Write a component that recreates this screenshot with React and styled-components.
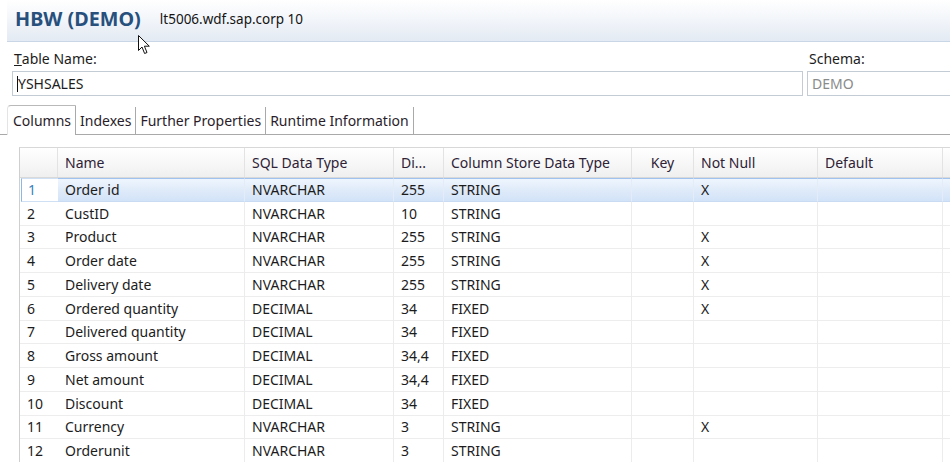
import React from "react";
import styled, { createGlobalStyle } from "styled-components";

const Global = createGlobalStyle`
  html, body { margin: 0; padding: 0; background: #fff; }
  body { width: 950px; height: 462px; overflow: hidden; font-family: "Segoe UI", "Noto Sans", "Open Sans", sans-serif; }
  * { box-sizing: border-box; }
`;

const Page = styled.div`
  position: relative;
  width: 950px;
  height: 462px;
  overflow: hidden;
  background: #fff;
`;

const Header = styled.div`
  margin-left: 7px;
  height: 42px;
  display: flex;
  align-items: center;
  gap: 19px;
  padding: 0 0 4px 8px;
  background: linear-gradient(#ffffff 0%, #f3f6fa 45%, #e3eaf3 100%);
  border-bottom: 1px solid #c9d6e6;
`;

const Title = styled.h1`
  margin: 0;
  font-size: 19.8px;
  font-weight: 700;
  color: #27507d;
`;

const Host = styled.span`
  font-size: 13.5px;
  color: #141414;
  padding-top: 1px;
`;

const Form = styled.div`
  display: grid;
  grid-template-columns: 791px 1fr;
  column-gap: 4px;
  padding: 6px 0 0 12px;
`;

const Label = styled.label`
  font-size: 14px;
  color: #1c1c1c;
  padding: 0 0 3px 2px;
  height: 23px;
  display: flex;
  align-items: center;
  u { text-decoration: underline; }
`;

const Input = styled.div`
  height: 25px;
  border: 1px solid #c3ccd5;
  border-right: ${(p) => (p.$open ? "none" : "1px solid #c3ccd5")};
  display: flex;
  align-items: center;
  padding-left: 4px;
  font-size: 14px;
  color: ${(p) => (p.$muted ? "#8a8a8a" : "#1c1c1c")};
`;

const Caret = styled.span`
  display: inline-block;
  width: 1px;
  height: 16px;
  background: #111;
`;

const TabBar = styled.div`
  display: flex;
  margin-top: 10px;
  height: 29px;
  padding-left: 7px;
  border-bottom: 1px solid #a9a9a9;
`;

const Tab = styled.div`
  height: 27px;
  align-self: flex-end;
  padding: 0 4px 0 4px;
  display: flex;
  align-items: center;
  font-size: 14px;
  color: #2a1d2a;
  background: #fff;
  border-right: 1px solid #a9a9a9;
  ${(p) =>
    p.$active &&
    `
    padding: 0 4px 0 5px;
    border-top: 1px solid #b9b9b9;
    border-left: 1px solid #e4e4e4;
    border-top-left-radius: 4px;
    margin-bottom: -1px;
    height: 30px;
  `}
`;

const TableWrap = styled.div`
  margin: 12px 0 0 19px;
  border-top: 1px solid #d8d8d8;
  border-left: 1px solid #cfcfcf;
`;

const COLS = "38px 187px 149px 50px 188px 62px 124px 125px 1fr";

const HeadRow = styled.div`
  display: grid;
  grid-template-columns: ${COLS};
  height: 30px;
  background: linear-gradient(#ffffff 0%, #f7f7f7 55%, #efefef 100%);
  border-bottom: 1px solid #d9d9d9;
`;

const HeadCell = styled.div`
  display: flex;
  align-items: center;
  justify-content: ${(p) => (p.$center ? "center" : "flex-start")};
  padding-left: ${(p) => (p.$center ? "0" : "7px")};
  font-size: 14px;
  color: #2e2236;
  border-right: 1px solid #e3e3e3;
  white-space: nowrap;
  overflow: hidden;
`;

const Row = styled.div`
  display: grid;
  grid-template-columns: ${COLS};
  height: 23.75px;
`;

const NumCell = styled.div`
  display: flex;
  align-items: center;
  padding-left: 7px;
  font-size: 14px;
  color: ${(p) => (p.$sel ? "#3d7fc0" : "#1c1c1c")};
  border-bottom: 1px solid #ededed;
  ${(p) =>
    p.$sel &&
    `
    border-left: 1px solid #8fb6e4;
    border-top: 1px solid #cfe0f4;
    border-bottom: 1px solid #cfe0f4;
    margin-left: 1px;
    padding-left: 6px;
  `}
`;

const Cell = styled.div`
  display: flex;
  align-items: center;
  padding-left: 7px;
  font-size: 14px;
  color: #1c1c1c;
  white-space: nowrap;
  border-right: 1px solid #ececec;
  border-bottom: 1px solid #ededed;
  ${(p) =>
    p.$sel &&
    `
    background: linear-gradient(#eef5fd 0%, #dde9f9 60%, #d2e3f8 100%);
    border-top: 1px solid #9fc3ee;
    border-bottom: 1px solid #c9dbf2;
    border-right: 1px solid #e3ecf7;
  `}
`;

const Cursor = styled.svg`
  position: absolute;
  left: 138px;
  top: 35px;
`;

const rows = [
  ["Order id", "NVARCHAR", "255", "STRING", "X"],
  ["CustID", "NVARCHAR", "10", "STRING", ""],
  ["Product", "NVARCHAR", "255", "STRING", "X"],
  ["Order date", "NVARCHAR", "255", "STRING", "X"],
  ["Delivery date", "NVARCHAR", "255", "STRING", "X"],
  ["Ordered quantity", "DECIMAL", "34", "FIXED", "X"],
  ["Delivered quantity", "DECIMAL", "34", "FIXED", ""],
  ["Gross amount", "DECIMAL", "34,4", "FIXED", ""],
  ["Net amount", "DECIMAL", "34,4", "FIXED", ""],
  ["Discount", "DECIMAL", "34", "FIXED", ""],
  ["Currency", "NVARCHAR", "3", "STRING", "X"],
  ["Orderunit", "NVARCHAR", "3", "STRING", ""],
];

export default function App() {
  return (
    <Page>
      <Global />
      <Header>
        <Title>HBW (DEMO)</Title>
        <Host>lt5006.wdf.sap.corp 10</Host>
      </Header>
      <Form>
        <Label>
          <u>T</u>able Name:
        </Label>
        <Label>Schema:</Label>
        <Input>
          <Caret />
          YSHSALES
        </Input>
        <Input $muted $open>
          DEMO
        </Input>
      </Form>
      <TabBar>
        <Tab $active>Columns</Tab>
        <Tab>Indexes</Tab>
        <Tab>Further Properties</Tab>
        <Tab>Runtime Information</Tab>
      </TabBar>
      <TableWrap>
        <HeadRow>
          <HeadCell />
          <HeadCell>Name</HeadCell>
          <HeadCell>SQL Data Type</HeadCell>
          <HeadCell>Di...</HeadCell>
          <HeadCell>Column Store Data Type</HeadCell>
          <HeadCell $center>Key</HeadCell>
          <HeadCell>Not Null</HeadCell>
          <HeadCell>Default</HeadCell>
          <HeadCell />
        </HeadRow>
        {rows.map((r, i) => {
          const sel = i === 0;
          return (
            <Row key={i}>
              <NumCell $sel={sel}>{i + 1}</NumCell>
              <Cell $sel={sel}>{r[0]}</Cell>
              <Cell $sel={sel}>{r[1]}</Cell>
              <Cell $sel={sel}>{r[2]}</Cell>
              <Cell $sel={sel}>{r[3]}</Cell>
              <Cell $sel={sel}></Cell>
              <Cell $sel={sel}>{r[4]}</Cell>
              <Cell $sel={sel}></Cell>
              <Cell $sel={sel}></Cell>
            </Row>
          );
        })}
      </TableWrap>
      <Cursor width="13" height="20" viewBox="0 0 13 20">
        <path
          d="M0.5 0.5 L0.5 15.5 L4 12 L6.6 18.5 L9 17.5 L6.4 11.2 L11.3 11.2 Z"
          fill="#fff"
          stroke="#111"
          strokeWidth="1"
        />
      </Cursor>
    </Page>
  );
}
